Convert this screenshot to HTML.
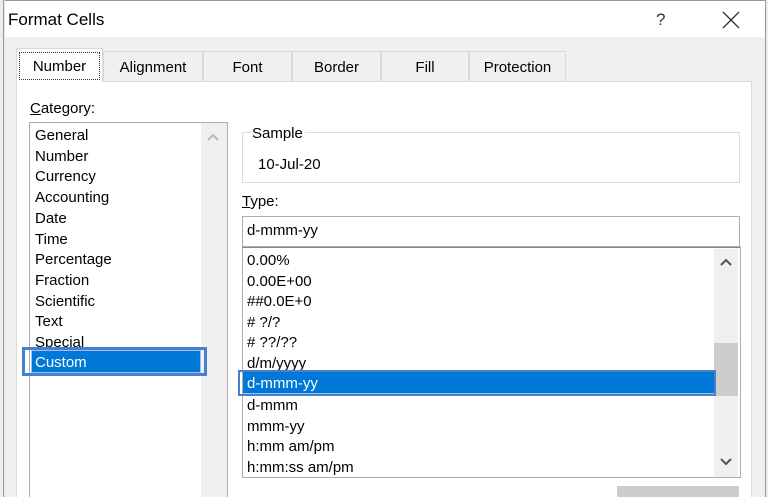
<!DOCTYPE html>
<html><head><meta charset="utf-8"><style>
*{margin:0;padding:0;box-sizing:border-box}
html,body{width:768px;height:497px;overflow:hidden}
body{background:#e9e9e9;font-family:"Liberation Sans",sans-serif;font-size:15px;color:#000;position:relative}
.a{position:absolute}
.t{position:absolute;white-space:nowrap;line-height:20px}
.tab{position:absolute;top:51px;height:30px;background:#f0f0f0;border:1px solid #dadada;border-bottom:none;text-align:center;line-height:31px;font-size:15px}
</style></head><body>
<div class="a" style="left:0;top:0;width:4px;height:497px;background:#eee;border-right:1px solid #999"></div>
<div class="a" style="left:765px;top:0;width:3px;height:497px;background:#eee;border-left:1px solid #999"></div>
<div class="a" style="left:5px;top:0;width:760px;height:497px;background:#f0f0f0"></div>
<div class="a" style="left:5px;top:0;width:760px;height:37px;background:#fff;border-top:1px solid #999"></div>
<div class="t" style="left:8px;top:10px;font-size:17px">Format Cells</div>
<div class="t" style="left:656px;top:10px;font-size:17px;color:#333">?</div>
<svg class="a" style="left:722px;top:11px" width="18" height="18"><path d="M1 1L17 17M17 1L1 17" stroke="#333" stroke-width="1.3"/></svg>
<div class="a" style="left:16px;top:81px;width:736px;height:416px;background:#fff;border:1px solid #dadada;border-bottom:none"></div>
<div class="tab" style="left:103px;width:100px">Alignment</div>
<div class="tab" style="left:203px;width:89px">Font</div>
<div class="tab" style="left:292px;width:89px">Border</div>
<div class="tab" style="left:381px;width:88px">Fill</div>
<div class="tab" style="left:469px;width:97px">Protection</div>
<div class="a" style="left:16px;top:48px;width:87px;height:34px;background:#fff;border:1px solid #dadada;border-bottom:none"></div>
<div class="a" style="left:19px;top:52px;width:81px;height:28px;border:1px dotted #333;text-align:center;line-height:28px;font-size:15px">Number</div>
<div class="t" style="left:30px;top:99px;font-size:15px"><u>C</u>ategory:</div>
<div class="a" style="left:29px;top:122px;width:199px;height:380px;border:1px solid #adadad;background:#fff"></div>
<div class="a" style="left:201px;top:123px;width:26px;height:380px;background:#f0f0f0"></div>
<svg class="a" style="left:206px;top:132px" width="14" height="10"><path d="M2 8L7 3L12 8" stroke="#bbb" stroke-width="2" fill="none"/></svg>
<div class="t" style="left:35px;top:126px;font-size:15px;line-height:20.7px">General<br>Number<br>Currency<br>Accounting<br>Date<br>Time<br>Percentage<br>Fraction<br>Scientific<br>Text<br>Special</div>
<div class="a" style="left:22px;top:347px;width:185px;height:29px;border:3px solid #4a7fcf"></div>
<div class="a" style="left:31px;top:350px;width:170px;height:23px;background:#0078d7;border:1px solid #9cc3ec"></div>
<div class="t" style="left:35px;top:353px;font-size:15px;color:#fff">Custom</div>
<div class="a" style="left:242px;top:132px;width:498px;height:51px;border:1px solid #dcdcdc"></div>
<div class="t" style="left:250px;top:124px;font-size:15px;background:#fff;padding:0 2px">Sample</div>
<div class="t" style="left:258px;top:155px;font-size:15px">10-Jul-20</div>
<div class="t" style="left:242px;top:192px;font-size:15px"><u>T</u>ype:</div>
<div class="a" style="left:242px;top:216px;width:498px;height:31px;border:1px solid #adadad;background:#fff"></div>
<div class="t" style="left:247px;top:221px;font-size:15px">d-mmm-yy</div>
<div class="a" style="left:242px;top:247px;width:499px;height:231px;border:1px solid #adadad;border-top:1px solid #888;background:#fff"></div>
<div class="a" style="left:714px;top:249px;width:24px;height:228px;background:#f0f0f0"></div>
<div class="a" style="left:714px;top:343px;width:24px;height:53px;background:#cdcdcd"></div>
<svg class="a" style="left:719px;top:257px" width="14" height="10"><path d="M2 8L7 3L12 8" stroke="#555" stroke-width="2" fill="none"/></svg>
<svg class="a" style="left:719px;top:457px" width="14" height="10"><path d="M2 2L7 7L12 2" stroke="#555" stroke-width="2" fill="none"/></svg>
<div class="t" style="left:247px;top:251px;font-size:15px;line-height:20.6px">0.00%<br>0.00E+00<br>##0.0E+0<br># ?/?<br># ??/??<br>d/m/yyyy</div>
<div class="a" style="left:238px;top:370px;width:478px;height:26px;border:2px solid #4a7fcf"></div>
<div class="a" style="left:243px;top:372px;width:471px;height:22px;background:#0078d7;border-bottom:1px solid #9cc3ec"></div>
<div class="t" style="left:247px;top:374px;font-size:15px;color:#fff">d-mmm-yy</div>
<div class="t" style="left:247px;top:396px;font-size:15px;line-height:20.6px">d-mmm<br>mmm-yy<br>h:mm am/pm<br>h:mm:ss am/pm</div>
<div class="a" style="left:617px;top:486px;width:122px;height:11px;background:#cccccc"></div>
</body></html>
